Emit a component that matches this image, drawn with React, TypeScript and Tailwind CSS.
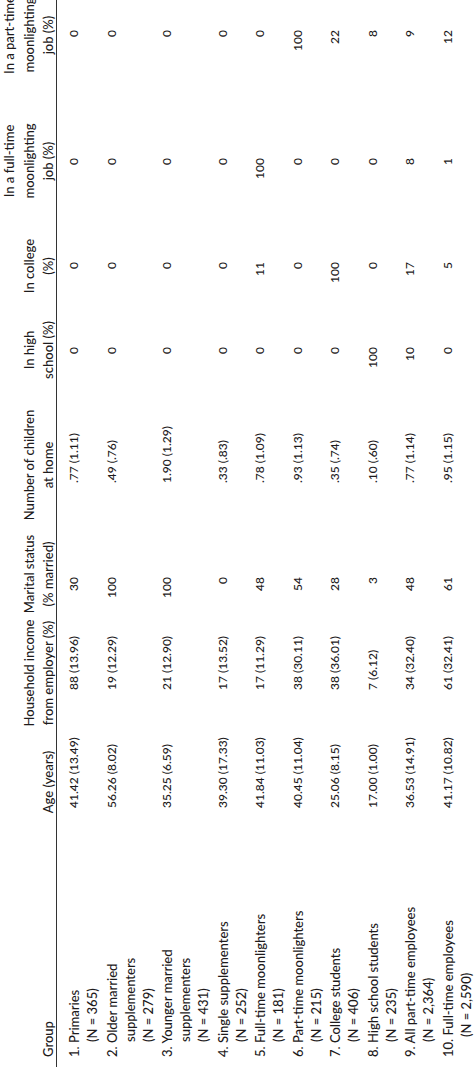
const cols =
  "grid grid-cols-[245px_80px_138px_60px_158px_72px_96px_114px_138px]";

const headers: { lines: string[]; cls: string }[] = [
  { lines: ["Group"], cls: "items-start pl-[10px]" },
  { lines: ["Age (years)"], cls: "items-center" },
  { lines: ["Household income", "from employer (%)"], cls: "items-center" },
  { lines: ["Marital status", "(% married)"], cls: "items-center" },
  { lines: ["Number of children", "at home"], cls: "items-center" },
  { lines: ["In high", "school (%)"], cls: "items-center" },
  { lines: ["In college", "(%)"], cls: "items-center" },
  { lines: ["In a full-time", "moonlighting", "job (%)"], cls: "items-center" },
  { lines: ["In a part-time", "moonlighting", "job (%)"], cls: "items-center" },
];

// each value sits in a small box centred on its column: the box's edge is
// where the figures line up (start for the mean (sd) columns, end for the rest)
const valueBox = [
  "w-[52px] justify-start",
  "w-[34px] justify-start",
  "w-[0px] mr-[6px] justify-end",
  "w-[36px] justify-start",
  "w-[6px] justify-end",
  "w-[8px] justify-end",
  "w-[6px] justify-end",
  "w-[10px] justify-end",
];

const rows: { group: string[]; values: string[] }[] = [
  {
    group: ["1. Primaries", "(N = 365)"],
    values: ["41.42 (13.49)", "88 (13.96)", "30", ".77 (1.11)", "0", "0", "0", "0"],
  },
  {
    group: ["2. Older married", "supplementers", "(N = 279)"],
    values: ["56.26 (8.02)", "19 (12.29)", "100", ".49 (.76)", "0", "0", "0", "0"],
  },
  {
    group: ["3. Younger married", "supplementers", "(N = 431)"],
    values: ["35.25 (6.59)", "21 (12.90)", "100", "1.90 (1.29)", "0", "0", "0", "0"],
  },
  {
    group: ["4. Single supplementers", "(N = 252)"],
    values: ["39.30 (17.33)", "17 (13.52)", "0", ".33 (.83)", "0", "0", "0", "0"],
  },
  {
    group: ["5. Full-time moonlighters", "(N = 181)"],
    values: ["41.84 (11.03)", "17 (11.29)", "48", ".78 (1.09)", "0", "11", "100", "0"],
  },
  {
    group: ["6. Part-time moonlighters", "(N = 215)"],
    values: ["40.45 (11.04)", "38 (30.11)", "54", ".93 (1.13)", "0", "0", "0", "100"],
  },
  {
    group: ["7. College students", "(N = 406)"],
    values: ["25.06 (8.15)", "38 (36.01)", "28", ".35 (.74)", "0", "100", "0", "22"],
  },
  {
    group: ["8. High school students", "(N = 235)"],
    values: ["17.00 (1.00)", "7 (6.12)", "3", ".10 (.60)", "100", "0", "0", "8"],
  },
  {
    group: ["9. All part-time employees", "(N = 2,364)"],
    values: ["36.53 (14.91)", "34 (32.40)", "48", ".77 (1.14)", "10", "17", "8", "9"],
  },
  {
    group: ["10. Full-time employees", "(N = 2,590)"],
    values: ["41.17 (10.82)", "61 (32.41)", "61", ".95 (1.15)", "0", "5", "1", "12"],
  },
];

export default function App() {
  return (
    <div className="w-[474px] h-[1067px] overflow-hidden bg-white">
      {/* the table is printed sideways: lay it out flat, then turn it */}
      <div className="w-[1101px] h-[474px] origin-top-left -rotate-90 translate-y-[1067px] font-['Lato',sans-serif] font-medium text-[#1e1b1c]">
        <div className={`${cols} h-[57px] border-b border-[#333] pb-[2px] text-[13px] leading-[19.5px]`}>
          {headers.map((h, i) => (
            <div key={i} className={`flex flex-col justify-end whitespace-nowrap text-center ${h.cls}`}>
              {h.lines.map((l) => (
                <span key={l}>{l}</span>
              ))}
            </div>
          ))}
        </div>

        <div className="pt-[6.5px]">
          {rows.map((r, i) => (
            <div key={i} className={`${cols} pt-[1.5px] text-[13px] leading-[18px]`}>
              <div className="pl-[10px] flex flex-col whitespace-nowrap">
                {r.group.map((l, j) => (
                  <span key={j} className={j === 0 ? "" : i === 9 ? "pl-[20px]" : "pl-[15px]"}>
                    {l}
                  </span>
                ))}
              </div>
              {r.values.map((v, j) => (
                <div key={j} className="flex justify-center">
                  <div className={`flex ${valueBox[j]}`}>
                    <span className="whitespace-nowrap text-[12px]">{v}</span>
                  </div>
                </div>
              ))}
            </div>
          ))}
        </div>
      </div>
    </div>
  );
}
